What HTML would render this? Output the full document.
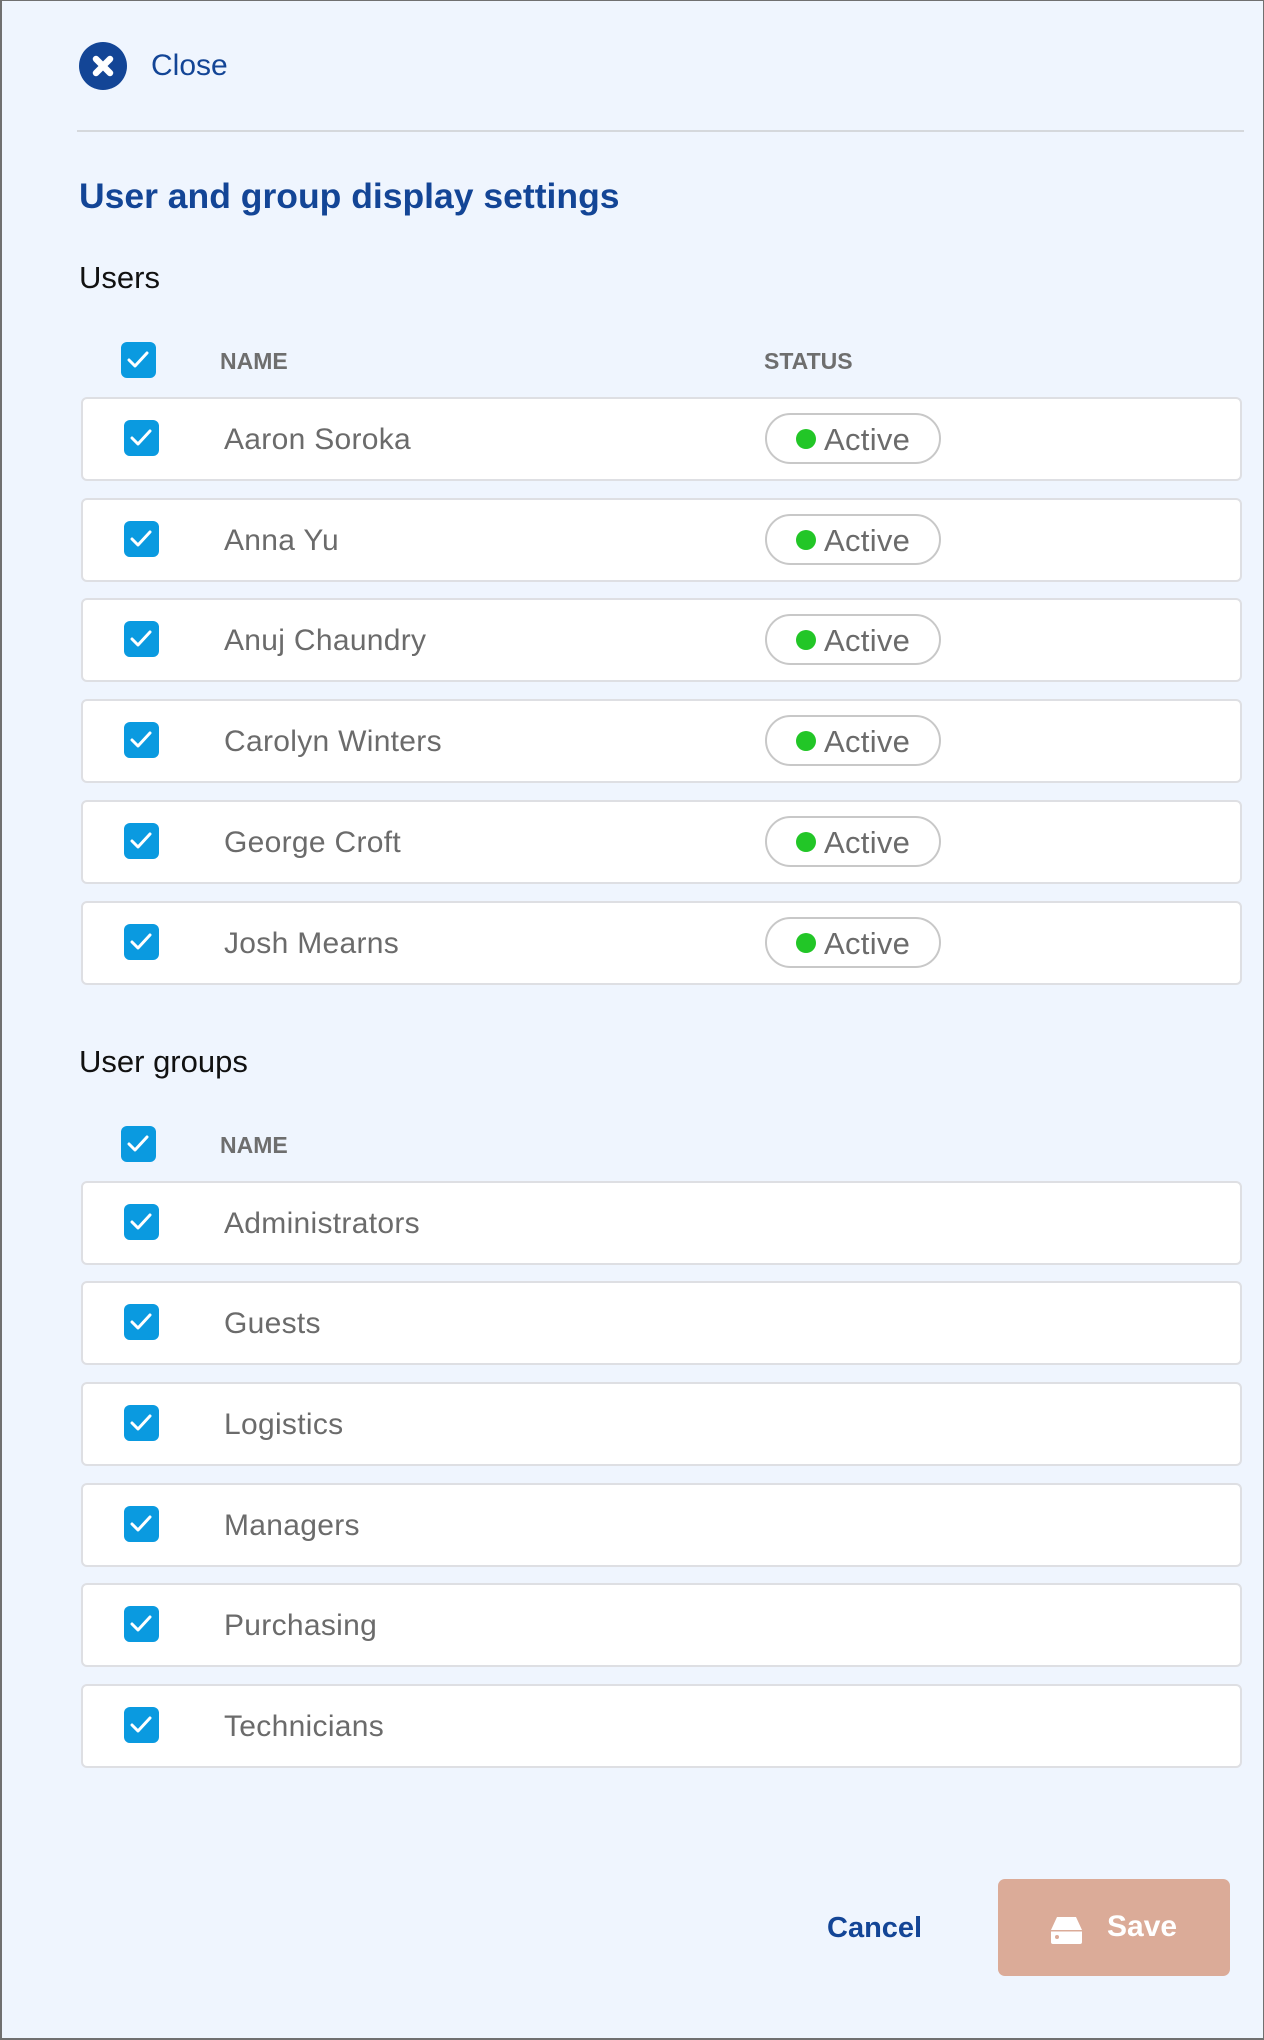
<!DOCTYPE html>
<html><head><style>
*{box-sizing:border-box;margin:0;padding:0}
body{width:1264px;height:2040px;background:#eff5fe;font-family:"Liberation Sans",sans-serif;position:relative;overflow:hidden}
.frame{position:absolute;left:0;top:0;width:1264px;height:2040px;border:2px solid #707070;border-right-width:1px;border-top-width:1px}
.a{position:absolute}
.cb{position:absolute;width:35px;height:36px;background:#0a9ae0;border-radius:6px}
.cb svg{position:absolute;left:6px;top:7px}
.row{position:absolute;left:81px;width:1161px;height:84px;background:#fff;border:2px solid #dedfe3;border-radius:6px}
.row .cb{left:41px;top:21px}
.row .nm{position:absolute;left:141px;top:1px;line-height:80px;font-size:30px;color:#6b6b6b;letter-spacing:0.3px}
.pill{position:absolute;left:682px;top:14px;width:176px;height:51px;border:2px solid #c8c8c8;border-radius:26px;background:#fff}
.pill i{position:absolute;left:29px;top:14px;width:20px;height:20px;border-radius:50%;background:#22c627}
.pill span{position:absolute;left:57px;top:1px;line-height:47px;font-size:31px;color:#6b6b6b;letter-spacing:0.3px}
.hd{position:absolute;font-size:23px;font-weight:bold;color:#6e6e6e}
.sec{position:absolute;left:79px;font-size:31px;color:#111}
</style></head><body>
<div class="frame"></div>
<svg class="a" style="left:79px;top:42px" width="48" height="48" viewBox="0 0 48 48"><circle cx="24" cy="24" r="24" fill="#134596"/><path d="M17 17L31 31M31 17L17 31" stroke="#fff" stroke-width="6.5" stroke-linecap="round"/></svg>
<div class="a" style="left:151px;top:49px;font-size:30px;color:#134596">Close</div>
<div class="a" style="left:77px;top:130px;width:1167px;height:2px;background:#d5d8dc"></div>
<div class="a" style="left:79px;top:176px;font-size:35.5px;font-weight:bold;color:#134596">User and group display settings</div>
<div class="sec" style="top:260px">Users</div>
<div class="cb" style="left:121px;top:342px"><svg width="22" height="22" viewBox="0 0 22 22"><path d="M2 11l6 6L20 4" stroke="#fff" stroke-width="3" fill="none" stroke-linecap="round" stroke-linejoin="round"/></svg></div>
<div class="hd" style="left:220px;top:348px">NAME</div>
<div class="hd" style="left:764px;top:348px">STATUS</div>

<div class="row" style="top:397px"><div class="cb"><svg width="22" height="22" viewBox="0 0 22 22"><path d="M2 11l6 6L20 4" stroke="#fff" stroke-width="3" fill="none" stroke-linecap="round" stroke-linejoin="round"/></svg></div><div class="nm">Aaron Soroka</div><div class="pill"><i></i><span>Active</span></div></div>
<div class="row" style="top:498px"><div class="cb"><svg width="22" height="22" viewBox="0 0 22 22"><path d="M2 11l6 6L20 4" stroke="#fff" stroke-width="3" fill="none" stroke-linecap="round" stroke-linejoin="round"/></svg></div><div class="nm">Anna Yu</div><div class="pill"><i></i><span>Active</span></div></div>
<div class="row" style="top:598px"><div class="cb"><svg width="22" height="22" viewBox="0 0 22 22"><path d="M2 11l6 6L20 4" stroke="#fff" stroke-width="3" fill="none" stroke-linecap="round" stroke-linejoin="round"/></svg></div><div class="nm">Anuj Chaundry</div><div class="pill"><i></i><span>Active</span></div></div>
<div class="row" style="top:699px"><div class="cb"><svg width="22" height="22" viewBox="0 0 22 22"><path d="M2 11l6 6L20 4" stroke="#fff" stroke-width="3" fill="none" stroke-linecap="round" stroke-linejoin="round"/></svg></div><div class="nm">Carolyn Winters</div><div class="pill"><i></i><span>Active</span></div></div>
<div class="row" style="top:800px"><div class="cb"><svg width="22" height="22" viewBox="0 0 22 22"><path d="M2 11l6 6L20 4" stroke="#fff" stroke-width="3" fill="none" stroke-linecap="round" stroke-linejoin="round"/></svg></div><div class="nm">George Croft</div><div class="pill"><i></i><span>Active</span></div></div>
<div class="row" style="top:901px"><div class="cb"><svg width="22" height="22" viewBox="0 0 22 22"><path d="M2 11l6 6L20 4" stroke="#fff" stroke-width="3" fill="none" stroke-linecap="round" stroke-linejoin="round"/></svg></div><div class="nm">Josh Mearns</div><div class="pill"><i></i><span>Active</span></div></div>

<div class="sec" style="top:1044px">User groups</div>
<div class="cb" style="left:121px;top:1126px"><svg width="22" height="22" viewBox="0 0 22 22"><path d="M2 11l6 6L20 4" stroke="#fff" stroke-width="3" fill="none" stroke-linecap="round" stroke-linejoin="round"/></svg></div>
<div class="hd" style="left:220px;top:1132px">NAME</div>

<div class="row" style="top:1181px"><div class="cb"><svg width="22" height="22" viewBox="0 0 22 22"><path d="M2 11l6 6L20 4" stroke="#fff" stroke-width="3" fill="none" stroke-linecap="round" stroke-linejoin="round"/></svg></div><div class="nm">Administrators</div></div>
<div class="row" style="top:1281px"><div class="cb"><svg width="22" height="22" viewBox="0 0 22 22"><path d="M2 11l6 6L20 4" stroke="#fff" stroke-width="3" fill="none" stroke-linecap="round" stroke-linejoin="round"/></svg></div><div class="nm">Guests</div></div>
<div class="row" style="top:1382px"><div class="cb"><svg width="22" height="22" viewBox="0 0 22 22"><path d="M2 11l6 6L20 4" stroke="#fff" stroke-width="3" fill="none" stroke-linecap="round" stroke-linejoin="round"/></svg></div><div class="nm">Logistics</div></div>
<div class="row" style="top:1483px"><div class="cb"><svg width="22" height="22" viewBox="0 0 22 22"><path d="M2 11l6 6L20 4" stroke="#fff" stroke-width="3" fill="none" stroke-linecap="round" stroke-linejoin="round"/></svg></div><div class="nm">Managers</div></div>
<div class="row" style="top:1583px"><div class="cb"><svg width="22" height="22" viewBox="0 0 22 22"><path d="M2 11l6 6L20 4" stroke="#fff" stroke-width="3" fill="none" stroke-linecap="round" stroke-linejoin="round"/></svg></div><div class="nm">Purchasing</div></div>
<div class="row" style="top:1684px"><div class="cb"><svg width="22" height="22" viewBox="0 0 22 22"><path d="M2 11l6 6L20 4" stroke="#fff" stroke-width="3" fill="none" stroke-linecap="round" stroke-linejoin="round"/></svg></div><div class="nm">Technicians</div></div>

<div class="a" style="left:827px;top:1912px;font-size:29px;font-weight:bold;color:#134596">Cancel</div>
<div class="a" style="left:998px;top:1879px;width:232px;height:97px;background:#dbab98;border-radius:7px">
<svg class="a" style="left:52px;top:36px" width="33" height="29" viewBox="0 0 33 29"><path d="M7 2h19l6 13v12a2 2 0 0 1-2 2H3a2 2 0 0 1-2-2V15z" fill="#fff"/><rect x="1" y="15" width="31" height="1.5" fill="#dbab98"/><circle cx="7" cy="22" r="2" fill="#dbab98"/></svg>
<div class="a" style="left:109px;top:31px;font-size:30px;font-weight:bold;color:#fff">Save</div>
</div>
</body></html>
